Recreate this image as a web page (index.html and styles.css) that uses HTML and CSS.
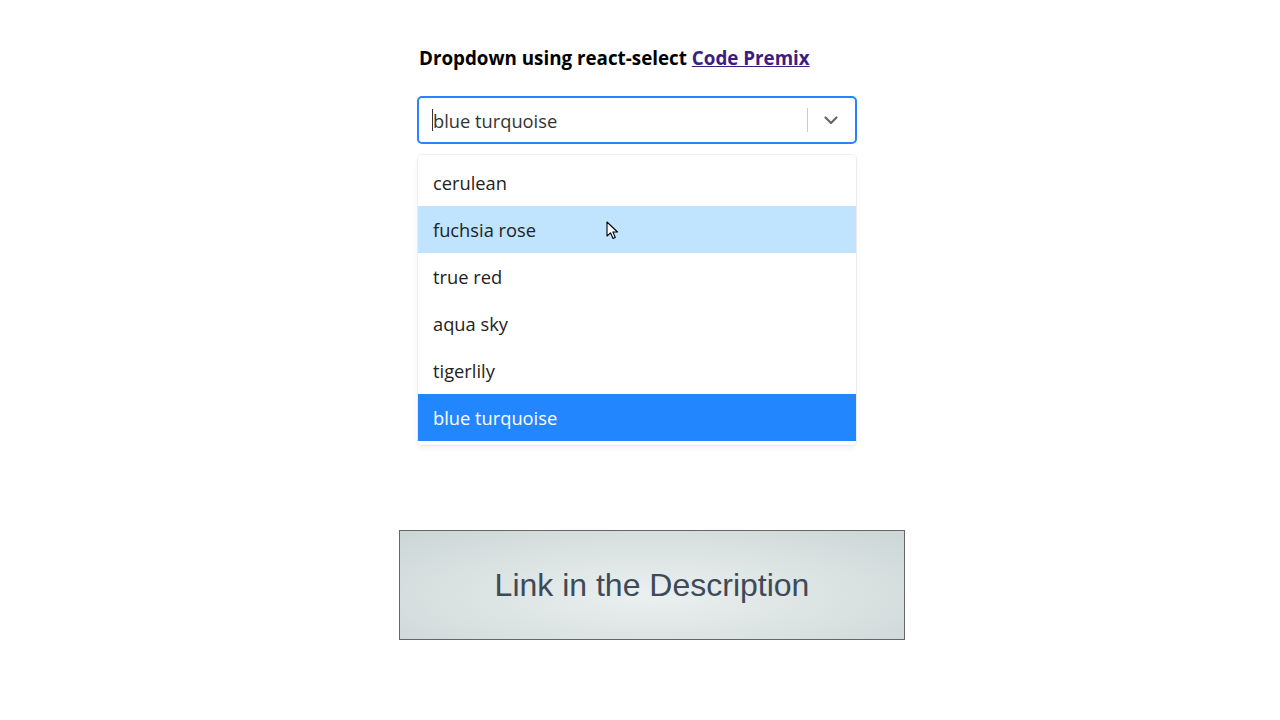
FILE: index.html
```html
<!DOCTYPE html>
<html>
<head>
<meta charset="utf-8">
<link rel="stylesheet" href="styles.css">
</head>
<body>
<div class="app">
  <h3 class="title">Dropdown using react-select <a href="#" class="link">Code Premix</a></h3>
  <div class="select">
    <div class="control">
      <div class="value"><span class="caret"></span>blue turquoise</div>
      <div class="indicators">
        <span class="sep"></span>
        <svg class="chev" width="20" height="20" viewBox="0 0 20 20"><path d="M4.5 7.5 L10 13 L15.5 7.5" fill="none" stroke="#666" stroke-width="2.2" stroke-linecap="round" stroke-linejoin="round"/></svg>
      </div>
    </div>
    <div class="menu">
      <div class="option">cerulean</div>
      <div class="option focused">fuchsia rose
        <svg class="cursor" width="14" height="20" viewBox="0 0 14 20"><path d="M1 1 L1 15 L4.5 11.8 L7 17.5 L9.3 16.5 L6.9 11 L11.5 11 Z" fill="#fff" stroke="#000" stroke-width="1.1" stroke-linejoin="round"/></svg>
      </div>
      <div class="option">true red</div>
      <div class="option">aqua sky</div>
      <div class="option">tigerlily</div>
      <div class="option selected">blue turquoise</div>
    </div>
  </div>
</div>
<div class="banner">Link in the Description</div>
</body>
</html>
```
FILE: styles.css
```css
html, body { margin: 0; padding: 0; background: #fff; }
body { font-family: "Open Sans", "Noto Sans", sans-serif; width: 1280px; height: 720px; overflow: hidden; }
.app { width: 440px; margin-left: 417px; padding-top: 44px; }
.title { margin: 0 0 0 2px; font-size: 18.8px; font-weight: 700; line-height: 28px; color: #000; letter-spacing: 0; }
.link { color: #3b1d84; text-decoration: underline; }
.select { margin-top: 24px; position: relative; }
.control { height: 44px; border: 2px solid #2684ff; border-radius: 5px; display: flex; align-items: center; box-sizing: content-box; width: 436px; }
.value { flex: 1; font-size: 18.3px; color: #333; padding-left: 13px; display: flex; align-items: center; }
.caret { width: 1px; height: 22px; background: #333; margin-right: 0; }
.indicators { display: flex; align-items: center; height: 100%; }
.sep { width: 1px; height: 24px; background: #ccc; }
.chev { margin: 0 14px 0 13px; }
.menu { margin-top: 11px; margin-left: 1px; width: 438px; padding: 4px 0; background: #fff; box-shadow: 0 0 0 1px rgba(0,0,0,0.05), 0 3px 6px rgba(0,0,0,0.06); border-radius: 4px; }
.option { height: 47px; line-height: 47px; padding-left: 15px; font-size: 18.3px; color: #222; position: relative; }
.focused { background: #c0e3fe; }
.selected { background: #2286fe; color: #fff; }
.cursor { position: absolute; left: 188px; top: 15px; }
.banner { margin: 85px 0 0 399px; width: 504px; height: 107px; border: 1px solid #666; display: flex; align-items: center; justify-content: center; padding-top: 1px; font-family: "Liberation Sans", Arial, sans-serif; font-size: 32px; color: #3e4a57; background: radial-gradient(ellipse at 50% 60%, #eaf0f0 0%, #dde4e4 45%, #ccd6d6 100%); }
```
